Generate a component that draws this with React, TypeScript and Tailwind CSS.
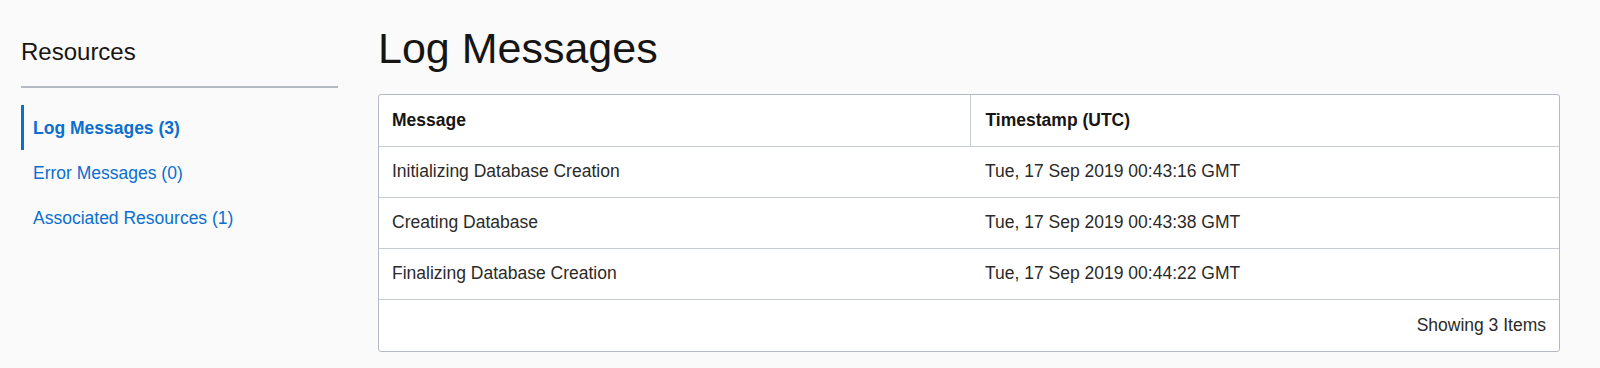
import React from 'react';

const rows = [
  { message: 'Initializing Database Creation', ts: 'Tue, 17 Sep 2019 00:43:16 GMT' },
  { message: 'Creating Database', ts: 'Tue, 17 Sep 2019 00:43:38 GMT' },
  { message: 'Finalizing Database Creation', ts: 'Tue, 17 Sep 2019 00:44:22 GMT' },
];

const navItems = [
  { label: 'Log Messages (3)', active: true },
  { label: 'Error Messages (0)', active: false },
  { label: 'Associated Resources (1)', active: false },
];

export default function App() {
  return (
    <div className="flex h-[368px] w-full bg-[#fafafa] font-['Liberation_Sans',Arial,sans-serif] text-[#161513]">
      {/* Sidebar */}
      <aside className="ml-[21px] w-[317px] shrink-0 pt-[38px]">
        <h2 className="text-[24px] leading-[28px] text-[#161513]">Resources</h2>
        <div className="mt-[20px] border-t-2 border-[#b5b9c2]" />
        <nav className="mt-[17px] flex flex-col">
          {navItems.map((item) => (
            <a
              key={item.label}
              href="#"
              className={`flex h-[45px] items-center border-l-[3px] pt-[1px] pl-[9px] text-[17.5px] text-[#0b6fcf] ${
                item.active ? 'border-[#0b6fcf] font-bold' : 'border-transparent'
              }`}
            >
              {item.label}
            </a>
          ))}
        </nav>
      </aside>

      {/* Main */}
      <main className="ml-[40px] mr-[40px] flex-1 pt-[22px]">
        <h1 className="text-[43px] leading-[52px] font-normal text-[#161513]">Log Messages</h1>
        <div className="mt-[20px] overflow-hidden rounded-[3px] border border-[#b5b9c6] bg-white text-[17.5px] text-[#2b2a28]">
          <table className="w-full border-collapse">
            <thead>
              <tr className="h-[51px] border-b border-[#c7cbd3]">
                <th className="w-[591px] border-r border-[#c7cbd3] pl-[13px] text-left font-bold text-[#161513]">Message</th>
                <th className="pl-[15px] text-left font-bold text-[#161513]">Timestamp (UTC)</th>
              </tr>
            </thead>
            <tbody>
              {rows.map((r) => (
                <tr key={r.ts} className="h-[51px] border-b border-[#c7cbd3]">
                  <td className="pl-[13px]">{r.message}</td>
                  <td className="pl-[15px]">{r.ts}</td>
                </tr>
              ))}
            </tbody>
          </table>
          <div className="flex h-[51px] items-center justify-end pr-[13px]">Showing 3 Items</div>
        </div>
      </main>
    </div>
  );
}
